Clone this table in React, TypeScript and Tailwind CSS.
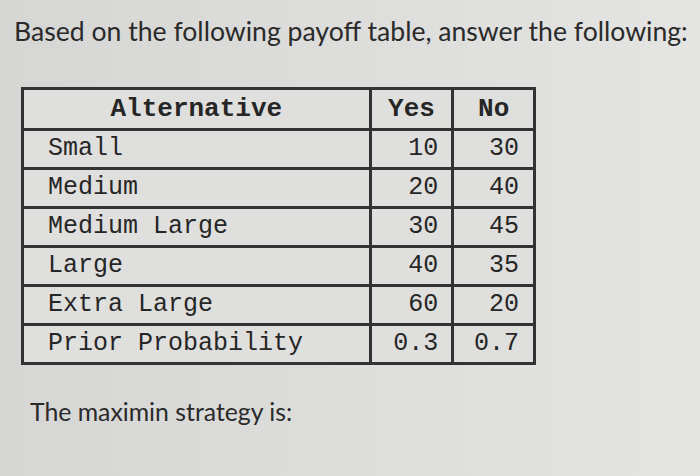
import React from "react";

type Row = { name: string; yes: string; no: string };

const rows: Row[] = [
  { name: "Small", yes: "10", no: "30" },
  { name: "Medium", yes: "20", no: "40" },
  { name: "Medium Large", yes: "30", no: "45" },
  { name: "Large", yes: "40", no: "35" },
  { name: "Extra Large", yes: "60", no: "20" },
  { name: "Prior Probability", yes: "0.3", no: "0.7" },
];

const mono = { fontFamily: '"Liberation Mono", "Courier New", monospace' };

const App: React.FC = () => {
  return (
    <div
      className="w-[700px] h-[476px] overflow-hidden bg-gradient-to-r from-[#d6d6d4] via-[#dddddc] to-[#e4e4e2] text-[#2b2b2b]"
      style={{ fontFamily: 'Lato, "Liberation Sans", sans-serif' }}
    >
      <div className="pl-[14px] pt-[14px] text-[26.6px] leading-[34px] text-[#2a2a2a]">
        Based on the following payoff table, answer the following:
      </div>

      <table
        className="ml-[21px] mt-[39px] w-[515px] border-collapse border-[3px] border-[#333] bg-[#dfdfdd] text-[25px] leading-[30px] text-[#262626]"
        style={mono}
      >
        <thead>
          <tr className="h-[41px]">
            <th className="w-[350px] border-[3px] border-[#333] text-center text-[26px] font-bold">Alternative</th>
            <th className="w-[83px] border-[3px] border-[#333] text-center text-[26px] font-bold">Yes</th>
            <th className="w-[82px] border-[3px] border-[#333] text-center text-[26px] font-bold">No</th>
          </tr>
        </thead>
        <tbody>
          {rows.map(r => (
            <tr key={r.name} className="h-[39px]">
              <td className="border-[3px] border-[#333] pl-[24px] text-left">{r.name}</td>
              <td className="border-[3px] border-[#333] pr-[13px] text-right">{r.yes}</td>
              <td className="border-[3px] border-[#333] pr-[14px] text-right">{r.no}</td>
            </tr>
          ))}
        </tbody>
      </table>

      <div className="pl-[30px] pt-[28px] text-[24.8px] text-[#2a2a2a]">The maximin strategy is:</div>
    </div>
  );
};

export default App;
